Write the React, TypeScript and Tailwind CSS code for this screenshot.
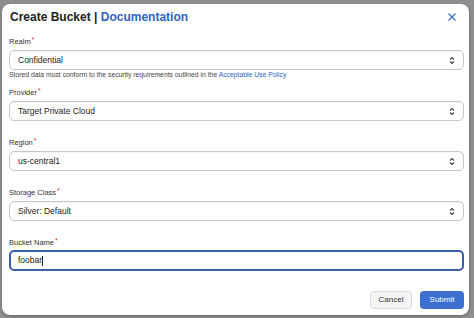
import React from 'react';

function Arrows() {
  return (
    <svg width="6" height="9" viewBox="0 0 6 9" className="text-[#444]">
      <path d="M1 3.5 L3 1.5 L5 3.5" fill="none" stroke="currentColor" strokeWidth="1.1" />
      <path d="M1 5.5 L3 7.5 L5 5.5" fill="none" stroke="currentColor" strokeWidth="1.1" />
    </svg>
  );
}

function Label({ text }: { text: string }) {
  return (
    <div className="h-[10px] flex items-center text-[7.5px] leading-[10px] text-[#333]">
      {text}
      <span className="text-[#d0342c] text-[7px] -mt-[5px] ml-[1px]">*</span>
    </div>
  );
}

function Select({ value }: { value: string }) {
  return (
    <div className="mt-[3px] h-[20px] flex items-center justify-between rounded-[5px] border border-[#c6c6c6] bg-white pl-[8px] pr-[8px] shadow-[inset_0_1px_1px_rgba(0,0,0,0.04)]">
      <span className="text-[8.5px] text-[#222]">{value}</span>
      <Arrows />
    </div>
  );
}

export default function App() {
  return (
    <div
      className="w-[474px] h-[318px] bg-[#8f8f8f] pt-[4px] pl-[2px] overflow-hidden"
      style={{ fontFamily: '"Liberation Sans", Arial, sans-serif' }}
    >
      <div className="w-[467px] h-[311px] bg-white rounded-[8px] pl-[7px] pr-[5px] pt-[5px] flex flex-col shadow-[0_1px_3px_rgba(0,0,0,0.3)]">
        <div className="h-[16px] flex items-center justify-between">
          <h1 className="ml-[1px] text-[12px] font-bold text-[#222] leading-[16px]">
            Create Bucket | <span className="text-[#2f64bf]">Documentation</span>
          </h1>
          <svg width="10" height="10" viewBox="0 0 10 10" className="mr-[7px] text-[#3f6fc4]">
            <path d="M1.5 1.5 L8.5 8.5 M8.5 1.5 L1.5 8.5" stroke="currentColor" strokeWidth="1.2" />
          </svg>
        </div>

        <div className="mt-[12px]">
          <Label text="Realm" />
          <Select value="Confidential" />
          <p className="mt-[1px] text-[6.8px] leading-[8px] text-[#444]">
            Stored data must conform to the security requirements outlined in the{' '}
            <span className="text-[#2f64bf]">Acceptable Use Policy</span>
          </p>
        </div>

        <div className="mt-[9px]">
          <Label text="Provider" />
          <Select value="Target Private Cloud" />
        </div>

        <div className="mt-[17px]">
          <Label text="Region" />
          <Select value="us-central1" />
        </div>

        <div className="mt-[17px]">
          <Label text="Storage Class" />
          <Select value="Silver: Default" />
        </div>

        <div className="mt-[17px]">
          <Label text="Bucket Name" />
          <div className="mt-[2px] h-[21px] flex items-center rounded-[5px] border-2 border-[#3a5ea8] pl-[7px]">
            <span className="text-[8.5px] text-[#222]">foobar</span>
            <span className="w-px h-[10px] bg-[#222]" />
          </div>
        </div>

        <div className="mt-[20px] flex justify-end gap-[8px]">
          <button className="w-[42px] h-[18px] rounded-[4px] border border-[#dcdcdc] bg-[#f4f4f4] text-[8px] text-[#333]">
            Cancel
          </button>
          <button className="w-[44px] h-[18px] rounded-[4px] bg-[#3b6fd1] text-[8px] font-medium text-white">
            Submit
          </button>
        </div>
      </div>
    </div>
  );
}
